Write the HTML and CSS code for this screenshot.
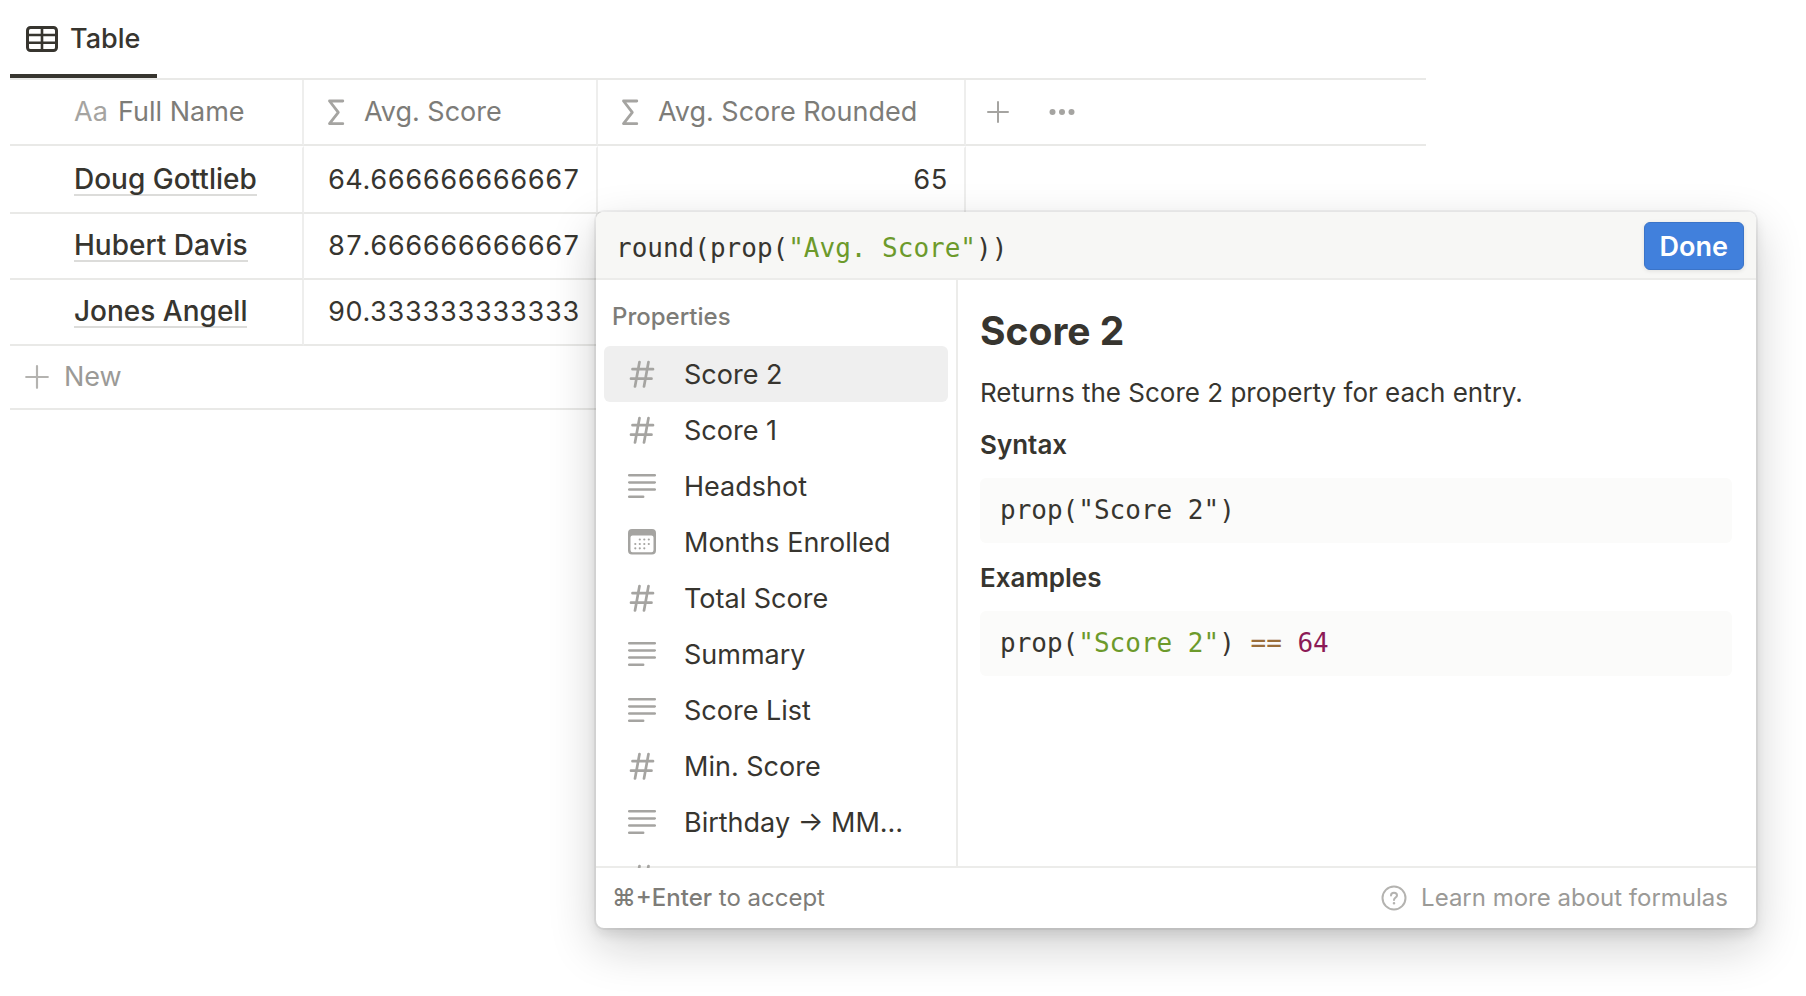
FILE: index.html
```html
<!DOCTYPE html>
<html lang="en">
<head>
    <meta charset="UTF-8" />
    <meta name="viewport" content="width=device-width, initial-scale=1.0" />
    <title>Table - Formula Editor</title>
    <link rel="stylesheet" href="styles.css">
</head>
<body>
    <!-- shared icons -->
    <svg class="sprite" aria-hidden="true">
        <symbol id="icon-number" viewBox="0 0 28 28">
            <path d="M11.5 2 7 26.500M20.500 2 16 26.500M4.500 9.200H25M3 18.700H23.500" fill="none" stroke="currentColor" stroke-width="2.700" stroke-linecap="round" />
        </symbol>
        <symbol id="icon-text" viewBox="0 0 28 28">
            <path d="M1.200 3.200H26.800M1.200 10.400H26.800M1.200 17.600H26.800M1.200 24.800H15.200" fill="none" stroke="currentColor" stroke-width="2.500" stroke-linecap="round" />
        </symbol>
        <symbol id="icon-date" viewBox="0 0 28 28">
            <path fill-rule="evenodd" fill="currentColor" d="M4 1H24Q28 1 28 5V22.500Q28 26.500 24 26.500H4Q0 26.500 0 22.500V5Q0 1 4 1ZM4.500 7.500Q2.500 7.500 2.500 9.500V22Q2.500 24.200 4.500 24.200H23.500Q25.500 24.200 25.500 22V9.500Q25.500 7.500 23.500 7.500Z" />
            <path d="M11.800 11.500H22.500M7.300 16H22.500M7.300 20.300H18" fill="none" stroke="currentColor" stroke-width="2.200" stroke-linecap="round" stroke-dasharray="0 4.500" />
        </symbol>
        <symbol id="icon-formula" viewBox="0 0 32 28">
            <path d="M22.800 3H9.500L18.300 14.300 9.500 25.700H22.800" fill="none" stroke="currentColor" stroke-width="2.800" stroke-linejoin="round" stroke-linecap="round" />
        </symbol>
        <symbol id="icon-plus" viewBox="0 0 32 32">
            <path d="M16 6V26M6 16H26" fill="none" stroke="currentColor" stroke-width="2" stroke-linecap="round" />
        </symbol>
    </svg>

    <nav class="tabs">
        <button class="tab active">
            <svg class="tab-icon" viewBox="0 0 32 26" aria-hidden="true">
                <rect x="1.500" y="1.500" width="29" height="23" rx="3" />
                <path d="M1.500 9H30.500M1.500 16.700H30.500M16 1.500V24.500" stroke-width="2.600" />
            </svg>
            Table
        </button>
    </nav>

    <table class="grid">
        <thead>
            <tr>
                <th class="col-name">
                    <div class="heading"><span class="title-icon">Aa</span>Full Name</div>
                </th>
                <th class="col-score">
                    <div class="heading"><svg class="heading-icon"><use href="#icon-formula" /></svg>Avg. Score</div>
                </th>
                <th class="col-rounded">
                    <div class="heading"><svg class="heading-icon"><use href="#icon-formula" /></svg>Avg. Score Rounded</div>
                </th>
                <th class="col-actions">
                    <div class="actions">
                        <button aria-label="Add property"><svg viewBox="0 0 32 32"><use href="#icon-plus" /></svg></button>
                        <button aria-label="More">
                            <svg viewBox="0 0 32 32" fill="currentColor">
                                <circle cx="6.500" cy="16" r="3" />
                                <circle cx="16" cy="16" r="3" />
                                <circle cx="25.500" cy="16" r="3" />
                            </svg>
                        </button>
                    </div>
                </th>
            </tr>
        </thead>
        <tbody>
            <tr>
                <td class="name"><a href="#">Doug Gottlieb</a></td>
                <td class="number">64.666666666667</td>
                <td class="number">65</td>
                <td></td>
            </tr>
            <tr>
                <td class="name"><a href="#">Hubert Davis</a></td>
                <td class="number">87.666666666667</td>
                <td class="number"></td>
                <td></td>
            </tr>
            <tr>
                <td class="name"><a href="#">Jones Angell</a></td>
                <td class="number">90.333333333333</td>
                <td class="number"></td>
                <td></td>
            </tr>
        </tbody>
        <tfoot>
            <tr>
                <td colspan="4">
                    <button class="new-row"><svg viewBox="4 4 24 24"><use href="#icon-plus" width="32" height="32" /></svg>New</button>
                </td>
            </tr>
        </tfoot>
    </table>

    <div class="popup" role="dialog" aria-label="Edit formula">
        <div class="popup-header">
            <div class="formula" role="textbox" aria-label="Formula" contenteditable="true" spellcheck="false">round(prop(<span class="string">"Avg. Score"</span>))</div>
            <button class="done">Done</button>
        </div>

        <div class="popup-body">
            <div class="sidebar">
                <div class="group-label">Properties</div>
                <button class="item selected"><svg><use href="#icon-number" /></svg><span>Score 2</span></button>
                <button class="item"><svg><use href="#icon-number" /></svg><span>Score 1</span></button>
                <button class="item"><svg><use href="#icon-text" /></svg><span>Headshot</span></button>
                <button class="item"><svg><use href="#icon-date" /></svg><span>Months Enrolled</span></button>
                <button class="item"><svg><use href="#icon-number" /></svg><span>Total Score</span></button>
                <button class="item"><svg><use href="#icon-text" /></svg><span>Summary</span></button>
                <button class="item"><svg><use href="#icon-text" /></svg><span>Score List</span></button>
                <button class="item"><svg><use href="#icon-number" /></svg><span>Min. Score</span></button>
                <button class="item"><svg><use href="#icon-text" /></svg><span>Birthday → MM…</span></button>
                <button class="item" aria-label="Number property"><svg><use href="#icon-number" /></svg></button>
            </div>

            <div class="details">
                <h2>Score 2</h2>
                <p>Returns the Score 2 property for each entry.</p>
                <h3>Syntax</h3>
                <code>prop("Score 2")</code>
                <h3>Examples</h3>
                <code>prop(<span class="string">"Score 2"</span>) <span class="operator">==</span> <span class="literal">64</span></code>
            </div>
        </div>

        <div class="popup-footer">
            <div class="hint"><b>⌘+Enter</b> to accept</div>
            <a class="learn-more" href="#">
                <svg viewBox="0 0 26 26" aria-hidden="true">
                    <circle cx="13" cy="13" r="11.500" stroke-width="2" />
                    <path d="M10 10.500Q10 7.800 13 7.800T16 10.400C16 12.400 13 12.600 13 15" stroke-width="2" stroke-linecap="round" />
                    <circle cx="13" cy="18.300" r="0.600" stroke-width="1.400" />
                </svg>
                Learn more about formulas
            </a>
        </div>
    </div>
</body>
</html>
```

FILE: styles.css
```css
* {
    box-sizing: border-box;
}

body {
    position: relative;
    margin: 0;
    padding: 0 10px;
    min-height: 100vh;
    background: #fff;
    color: #37352f;
    font-family: Inter, "Liberation Sans", sans-serif;
    font-size: 27px;
    line-height: 36px;
    overflow: hidden;
}

button {
    padding: 0;
    border: none;
    background: transparent;
    color: inherit;
    font: inherit;
    cursor: pointer;
}

svg {
    display: block;
    flex-shrink: 0;
}

.sprite {
    position: absolute;
    width: 0;
    height: 0;
}

/* Tabs */

.tabs {
    display: flex;
}

.tab {
    display: flex;
    align-items: center;
    gap: 12px;
    height: 78px;
    padding: 4px 17px 0 16px;
    border-bottom: 4px solid transparent;
    font-weight: 500;
}

.tab.active {
    border-bottom-color: #37352f;
}

.tab-icon {
    width: 32px;
    height: 26px;
    fill: none;
    stroke: currentColor;
    stroke-width: 3;
}

/* Table */

.grid {
    width: calc(100% - 370px);
    min-width: 1416px;
    table-layout: fixed;
    border-collapse: separate;
    border-spacing: 0;
    border-top: 2px solid #e9e9e7;
}

.col-name {
    width: 294px;
}

.col-score {
    width: 294px;
}

.col-rounded {
    width: 368px;
}

.grid th,
.grid td {
    height: 66px;
    padding: 0 16px;
    border-right: 2px solid #eeeeed;
    border-bottom: 2px solid #e9e9e7;
    text-align: left;
    font-weight: 400;
}

.grid th:last-child,
.grid td:last-child {
    border-right: none;
}

.grid th:first-child,
.grid td.name {
    padding-left: 64px;
    padding-right: 0;
}

.grid tbody tr:first-child td {
    height: 68px;
    border-top: 2px solid #fff;
}

.heading {
    display: flex;
    align-items: center;
    gap: 12px;
    color: #7d7c78;
    white-space: nowrap;
}

.title-icon {
    width: 32px;
    color: #a5a4a1;
}

.heading-icon {
    width: 32px;
    height: 28px;
    color: #a5a4a1;
}

.actions {
    display: flex;
    gap: 32px;
    color: #a5a4a1;
}

.actions svg {
    width: 32px;
    height: 32px;
}

.name a {
    display: inline-block;
    border-bottom: 2px solid #dcdcda;
    color: inherit;
    font-size: 28px;
    font-weight: 500;
    line-height: 30px;
    text-decoration: none;
}

.grid td.number {
    text-align: right;
    font-variant-numeric: tabular-nums;
}

.grid tfoot td {
    height: 64px;
    padding: 0 14px;
}

.new-row {
    display: flex;
    align-items: center;
    gap: 14px;
    color: #9b9a97;
}

.new-row svg {
    width: 26px;
    height: 26px;
    color: #b4b3b0;
}

/* Formula popup */

.popup {
    position: absolute;
    top: 212px;
    left: 596px;
    right: 50px;
    border-radius: 8px;
    background: #fff;
    box-shadow: 0 0 0 2px rgba(15, 15, 15, 0.05), 0 6px 12px rgba(15, 15, 15, 0.1), 0 18px 48px rgba(15, 15, 15, 0.2);
    overflow: hidden;
}

.popup-header {
    display: flex;
    align-items: center;
    justify-content: space-between;
    height: 68px;
    padding: 2px 12px 0 20px;
    border-bottom: 2px solid #ececea;
    background: #f7f7f5;
}

.formula,
.details code {
    font-family: "DejaVu Sans Mono", monospace;
    font-size: 26px;
}

.formula {
    flex: 1;
    padding-top: 4px;
    outline: none;
}

.string {
    color: #6c9a2b;
}

.operator {
    color: #9a6e3a;
}

.literal {
    color: #8c1a56;
}

.done {
    height: 48px;
    padding: 2px 15px 0;
    border: 1px solid #3b74c8;
    border-radius: 6px;
    background: #4180dc;
    box-shadow: 0 1px 4px rgba(15, 15, 15, 0.1);
    color: #fff;
    font-weight: 600;
}

.popup-body {
    display: flex;
    height: 588px;
    box-shadow: inset 0 -2px #ececea;
    overflow: hidden;
}

.sidebar {
    width: 362px;
    flex-shrink: 0;
    padding: 20px 8px 0;
    border-right: 2px solid #ececea;
}

.group-label {
    margin-bottom: 12px;
    padding-left: 8px;
    color: #7d7c78;
    font-size: 24px;
    font-weight: 500;
    line-height: 34px;
}

.item {
    display: flex;
    align-items: center;
    gap: 28px;
    width: 100%;
    height: 56px;
    padding: 0 24px;
    border-radius: 6px;
    text-align: left;
    white-space: nowrap;
}

.item span {
    padding-top: 2px;
}

.item.selected {
    background: #efefef;
}

.item svg {
    width: 28px;
    height: 28px;
    color: #a5a4a1;
}

.details {
    flex: 1;
    padding: 27px 24px 0 22px;
    font-size: 26px;
}

.details h2 {
    margin: 0 0 20px;
    font-size: 39px;
    font-weight: 700;
    line-height: 48px;
}

.details p {
    margin: 0 0 16px;
}

.details h3 {
    margin: 0 0 15px;
    font-size: 26px;
    font-weight: 600;
}

.details code {
    display: block;
    margin-bottom: 17px;
    padding: 14px 20px 15px;
    border-radius: 6px;
    background: #fbfbfa;
}

.popup-footer {
    display: flex;
    align-items: center;
    justify-content: space-between;
    height: 60px;
    padding: 0 28px 0 16px;
    font-size: 24px;
}

.hint {
    color: #7d7c78;
}

.hint b {
    font-weight: 500;
}

.learn-more {
    display: flex;
    align-items: center;
    gap: 14px;
    color: #9b9a97;
    text-decoration: none;
}

.learn-more svg {
    width: 26px;
    height: 26px;
    fill: none;
    stroke: #b4b3b0;
}
```
